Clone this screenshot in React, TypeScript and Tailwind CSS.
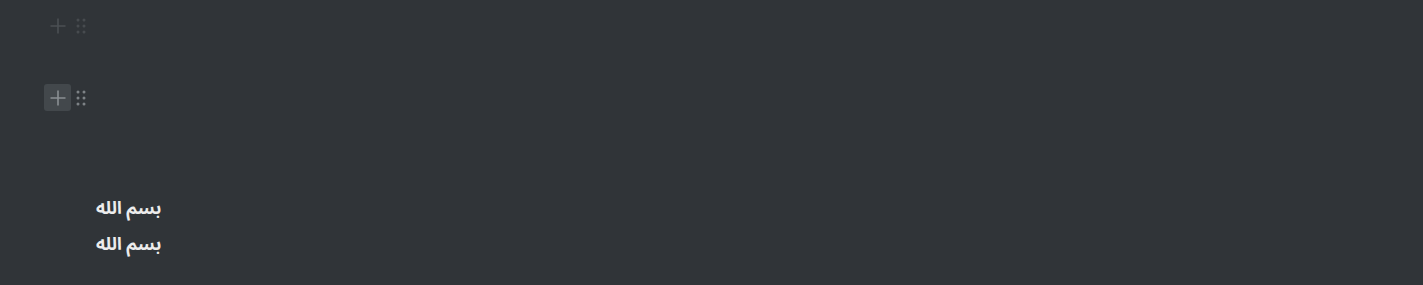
import React from "react";

function Handle({ active }: { active?: boolean }) {
  return (
    <div className={`flex items-center gap-[4px] ${active ? "" : "opacity-30"}`}>
      <div className={`flex h-[27px] w-[27px] items-center justify-center rounded-[3px] ${active ? "bg-[#43484c]" : ""}`}>
        <svg width="18" height="18" viewBox="0 0 18 18" fill="none">
          <path d="M9 1.5v15M1.5 9h15" stroke="#8a8f93" strokeWidth="1.6" />
        </svg>
      </div>
      <svg width="12" height="18" viewBox="0 0 12 18" fill="#7d8286">
        <circle cx="3" cy="3" r="1.5" />
        <circle cx="9" cy="3" r="1.5" />
        <circle cx="3" cy="9" r="1.5" />
        <circle cx="9" cy="9" r="1.5" />
        <circle cx="3" cy="15" r="1.5" />
        <circle cx="9" cy="15" r="1.5" />
      </svg>
    </div>
  );
}

export default function App() {
  return (
    <div className="h-[285px] w-full bg-[#303438] pl-[44px] pt-[12px]">
      <Handle />
      <div className="mt-[45px]">
        <Handle active />
      </div>
      <div className="mt-[80px] pl-[52px] text-[17.5px] font-bold leading-[36px] text-[#ececec]" style={{ fontFamily: '"Noto Sans Arabic", "Noto Sans", "DejaVu Sans", sans-serif' }}>
        <div dir="rtl" className="w-fit">بسم الله</div>
        <div dir="rtl" className="w-fit">بسم الله</div>
      </div>
    </div>
  );
}
